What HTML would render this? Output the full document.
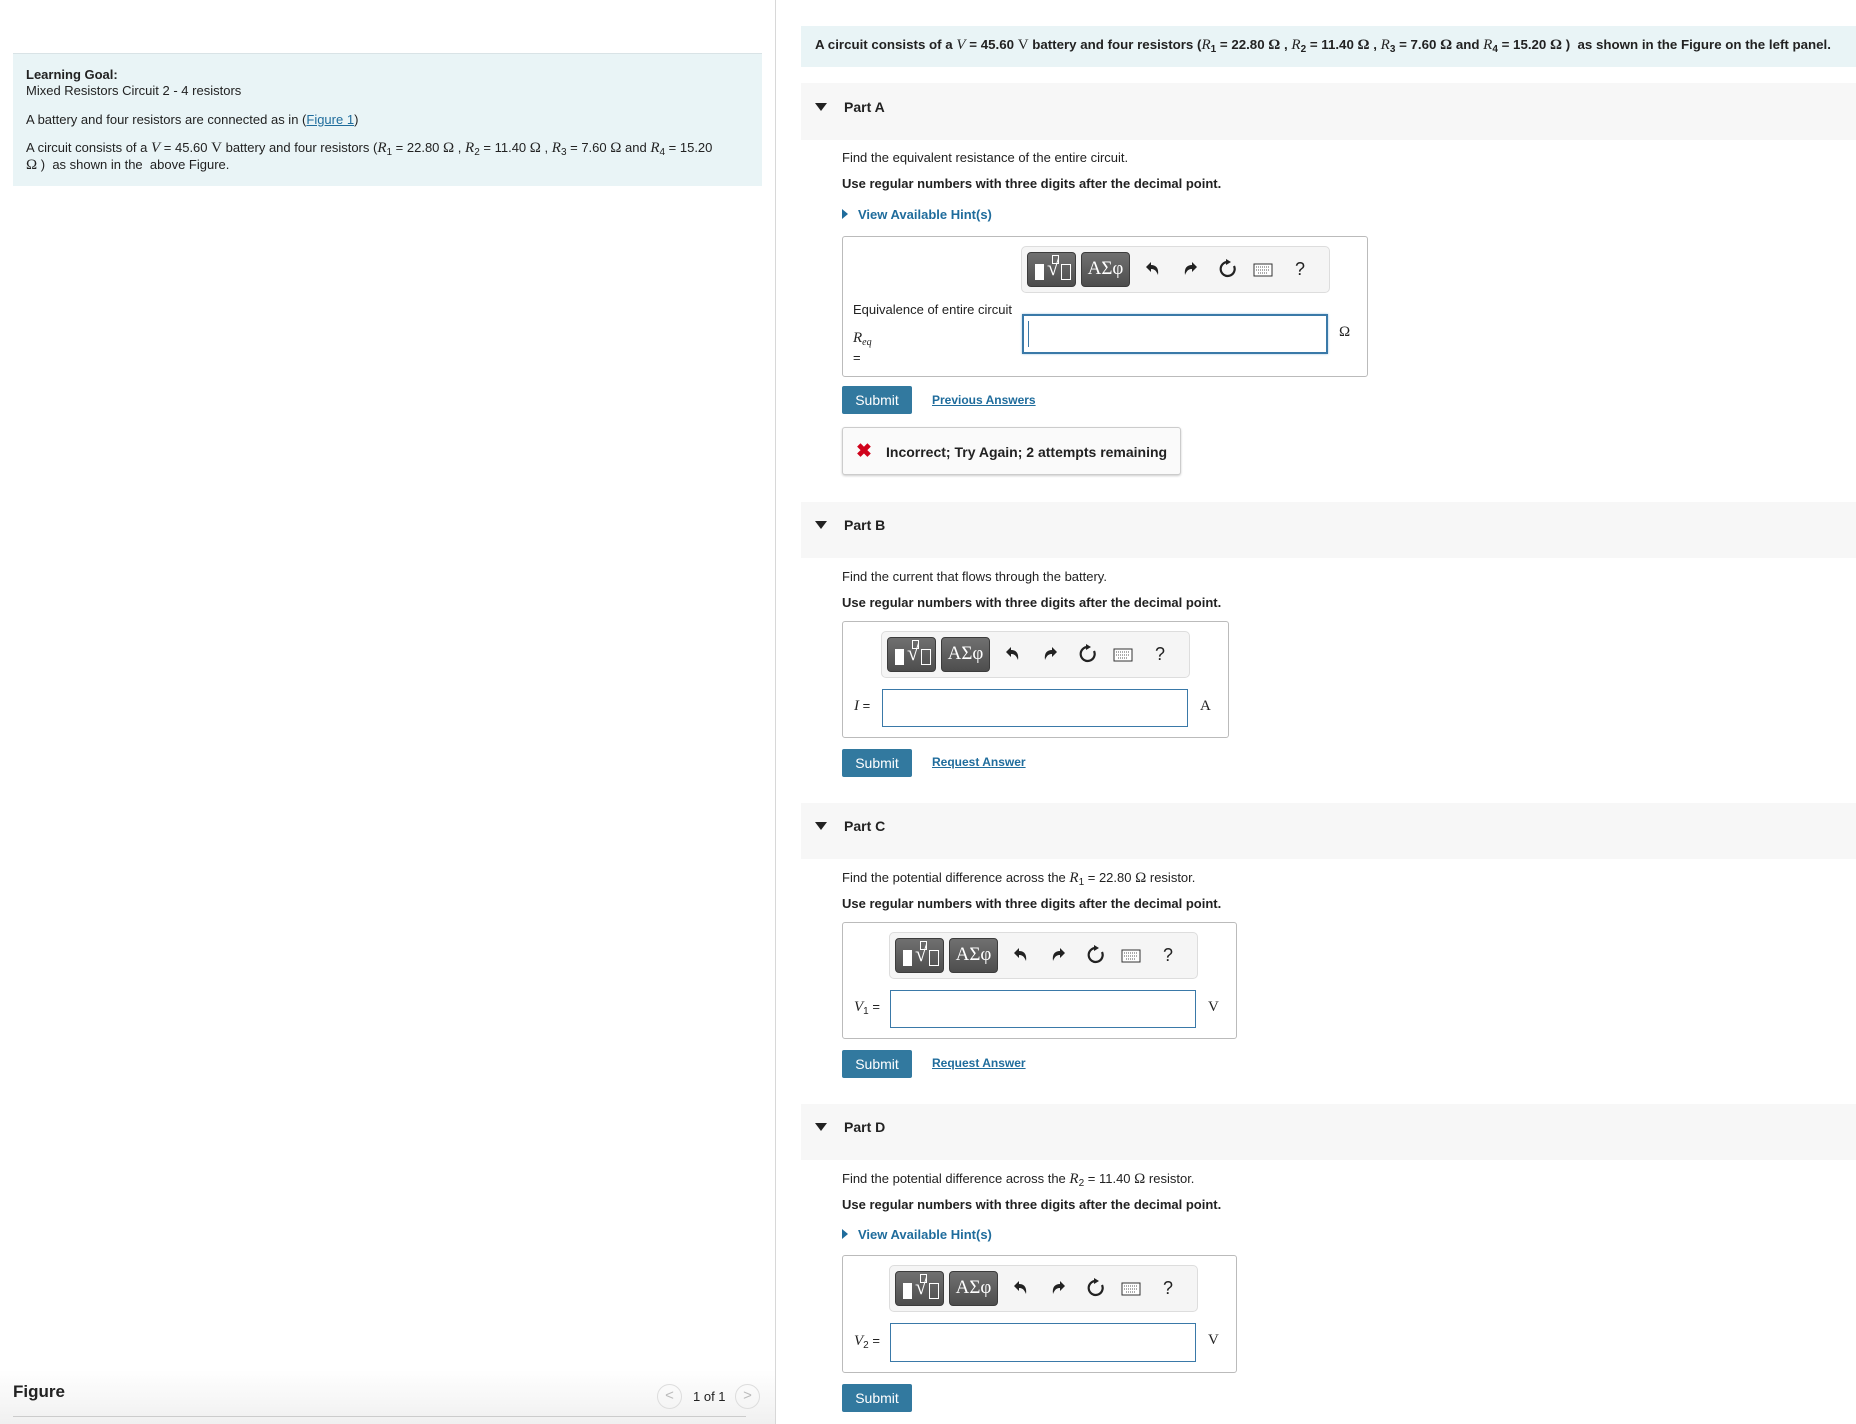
<!DOCTYPE html>
<html><head><meta charset="utf-8"><style>
*{margin:0;padding:0;box-sizing:border-box}
body{width:1856px;height:1424px;position:relative;background:#fff;font-family:"Liberation Sans",Arial,sans-serif;color:#222;font-size:13px;overflow:hidden}
sub{line-height:0;vertical-align:-3px;font-size:10px}
.a{position:absolute;white-space:nowrap}
.m{font-family:"Liberation Serif",serif;font-style:italic;font-size:15px}
.u{font-family:"Liberation Serif",serif;font-size:15px}
.b{font-weight:bold}
.hdr{position:absolute;left:801px;right:0;background:#f7f7f7}
.tri{position:absolute;left:815px;width:0;height:0;border-left:6px solid transparent;border-right:6px solid transparent;border-top:8px solid #222}
.ptitle{position:absolute;left:844px;font-size:14px;font-weight:bold}
.box{position:absolute;border:1px solid #bbb;border-radius:3px;background:#fff}
.tb{position:absolute;width:309px;height:47px;background:#f5f5f5;border:1px solid #ddd;border-radius:5px}
.btn{position:absolute;top:5px;width:49px;height:35px;border-radius:4px;background:linear-gradient(#707070,#4d4d4d);border:1px solid #3c3c3c;color:#fff}
.inp{position:absolute;border:2px solid #3a79a8;background:#fff;box-shadow:0 0 2px #9cc3df}
.sub{position:absolute;left:842px;width:70px;height:28px;background:#32799f;color:#fff;font-size:14px;text-align:center;line-height:28px;border-radius:2px}
.lnk{position:absolute;color:#1f6c9c;font-weight:bold;text-decoration:underline;font-size:12px}
.hint{position:absolute;left:842px;color:#1f6c9c;font-weight:bold;font-size:13px}
.hint:before{content:"";display:inline-block;border-top:5px solid transparent;border-bottom:5px solid transparent;border-left:6px solid #1f6c9c;margin-right:10px}
</style></head><body>

<div class="a" style="left:775px;top:0;width:1px;height:1424px;background:#d8d8d8"></div>
<div class="a" style="left:13px;top:53px;width:749px;height:133px;background:#e9f4f6;border-top:1px solid #d9e3e6"></div>
<div class="a b" style="left:26px;top:67px">Learning Goal:</div>
<div class="a" style="left:26px;top:83px">Mixed Resistors Circuit 2 - 4 resistors</div>
<div class="a" style="left:26px;top:112px">A battery and four resistors are connected as in (<span style="color:#1f6c9c;text-decoration:underline">Figure 1</span>)</div>
<div class="a" style="left:26px;top:140px">A circuit consists of a <span class="m">V</span> = 45.60 <span class="u">V</span> battery and four resistors (<span class="m">R</span><sub>1</sub> = 22.80 <span class="u">Ω</span> , <span class="m">R</span><sub>2</sub> = 11.40 <span class="u">Ω</span> , <span class="m">R</span><sub>3</sub> = 7.60 <span class="u">Ω</span> and <span class="m">R</span><sub>4</sub> = 15.20</div>
<div class="a" style="left:26px;top:157px"><span class="u">Ω</span> )&nbsp; as shown in the&nbsp; above Figure.</div>

<div class="a" style="left:0;top:1370px;width:775px;height:54px;background:linear-gradient(#fff,#f0f0f0)"></div>
<div class="a b" style="left:13px;top:1382px;font-size:17px">Figure</div>
<div class="a" style="left:657px;top:1384px;width:25px;height:25px;border:1px solid #ddd;border-radius:50%;color:#bbb;text-align:center;line-height:22px;font-size:15px">&lt;</div>
<div class="a" style="left:693px;top:1389px;font-size:13px">1 of 1</div>
<div class="a" style="left:735px;top:1384px;width:25px;height:25px;border:1px solid #ddd;border-radius:50%;color:#bbb;text-align:center;line-height:22px;font-size:15px">&gt;</div>
<div class="a" style="left:13px;top:1416px;width:733px;height:1px;background:#ccc"></div>

<div class="a" style="left:801px;top:26px;width:1055px;height:41px;background:#e9f4f6"></div>
<div class="a b" style="left:815px;top:37px;font-size:13.3px">A circuit consists of a <span class="m" style="font-weight:normal">V</span> = 45.60 <span class="u" style="font-weight:normal">V</span> battery and four resistors (<span class="m" style="font-weight:normal">R</span><sub>1</sub> = 22.80 <span class="u">Ω</span> , <span class="m" style="font-weight:normal">R</span><sub>2</sub> = 11.40 <span class="u">Ω</span> , <span class="m" style="font-weight:normal">R</span><sub>3</sub> = 7.60 <span class="u">Ω</span> and <span class="m" style="font-weight:normal">R</span><sub>4</sub> = 15.20 <span class="u">Ω</span> )&nbsp; as shown in the Figure on the left panel.</div>

<div class="hdr" style="top:83px;height:57px"></div>
<div class="tri" style="top:103px"></div>
<div class="ptitle" style="top:99px">Part A</div>
<div class="a" style="left:842px;top:150px">Find the equivalent resistance of the entire circuit.</div>
<div class="a b" style="left:842px;top:176px">Use regular numbers with three digits after the decimal point.</div>
<div class="hint" style="top:207px">View Available Hint(s)</div>
<div class="box" style="left:842px;top:236px;width:526px;height:141px"></div>
<div class="tb" style="left:1021px;top:246px">
<div class="btn" style="left:5px"><span style="position:absolute;left:7px;top:11px;width:9px;height:16px;background:#fff"></span><span style="position:absolute;left:19px;top:2px;font-family:'Liberation Serif',serif;font-size:22px">√</span><span style="position:absolute;left:24px;top:2px;width:7px;height:9px;border:1px solid #fff"></span><span style="position:absolute;left:33px;top:11px;width:10px;height:16px;border:1px solid #fff"></span></div>
<div class="btn" style="left:59px;font-family:'Liberation Serif',serif;font-size:19px;text-align:center;line-height:32px">ΑΣφ</div>
<svg style="position:absolute;left:121px;top:13px" width="18" height="18" viewBox="0 0 18 18"><path d="M3 7 L8 2 L8 5 C13 5 16 8 15 15 C13 10 11 9 8 9 L8 12 Z" fill="#222"/></svg>
<svg style="position:absolute;left:160px;top:13px" width="18" height="18" viewBox="0 0 18 18"><path d="M15 7 L10 2 L10 5 C5 5 2 8 3 15 C5 10 7 9 10 9 L10 12 Z" fill="#222"/></svg>
<svg style="position:absolute;left:196px;top:12px" width="20" height="20" viewBox="0 0 20 20"><path d="M10 3 A7 7 0 1 0 16 7" fill="none" stroke="#222" stroke-width="2.2"/><path d="M8 0 L13 3 L8 6 Z" fill="#222"/></svg>
<svg style="position:absolute;left:231px;top:16px" width="20" height="14" viewBox="0 0 20 14"><rect x="1" y="1" width="18" height="12" fill="#fff" stroke="#333"/><path d="M3 4h14M3 7h14M5 10h10" stroke="#555" stroke-dasharray="1 1"/></svg>
<div class="a" style="left:273px;top:12px;font-size:18px">?</div>
</div>
<div class="a" style="left:853px;top:302px">Equivalence of entire circuit</div>
<div class="a m" style="left:853px;top:330px">R<sub style="font-size:10px">eq</sub></div>
<div class="a" style="left:853px;top:350px">=</div>
<div class="inp" style="left:1022px;top:314px;width:306px;height:40px"><span style="position:absolute;left:4px;top:5px;width:1px;height:26px;background:#3a79a8"></span></div>
<div class="a u" style="left:1339px;top:324px">Ω</div>
<div class="sub" style="top:386px">Submit</div>
<div class="lnk" style="left:932px;top:393px">Previous Answers</div>
<div class="box" style="left:842px;top:427px;width:339px;height:48px;background:#fafafa;border-color:#ccc;box-shadow:0 1px 2px #ccc"></div>
<div class="a b" style="left:856px;top:440px;color:#d0021b;font-size:19px">✖</div>
<div class="a b" style="left:886px;top:444px;font-size:14px">Incorrect; Try Again; 2 attempts remaining</div>

<div class="hdr" style="top:502px;height:56px"></div>
<div class="tri" style="top:521px"></div>
<div class="ptitle" style="top:517px">Part B</div>
<div class="a" style="left:842px;top:569px">Find the current that flows through the battery.</div>
<div class="a b" style="left:842px;top:595px">Use regular numbers with three digits after the decimal point.</div>
<div class="box" style="left:842px;top:621px;width:387px;height:117px"></div>
<div class="tb" style="left:881px;top:631px">
<div class="btn" style="left:5px"><span style="position:absolute;left:7px;top:11px;width:9px;height:16px;background:#fff"></span><span style="position:absolute;left:19px;top:2px;font-family:'Liberation Serif',serif;font-size:22px">√</span><span style="position:absolute;left:24px;top:2px;width:7px;height:9px;border:1px solid #fff"></span><span style="position:absolute;left:33px;top:11px;width:10px;height:16px;border:1px solid #fff"></span></div>
<div class="btn" style="left:59px;font-family:'Liberation Serif',serif;font-size:19px;text-align:center;line-height:32px">ΑΣφ</div>
<svg style="position:absolute;left:121px;top:13px" width="18" height="18" viewBox="0 0 18 18"><path d="M3 7 L8 2 L8 5 C13 5 16 8 15 15 C13 10 11 9 8 9 L8 12 Z" fill="#222"/></svg>
<svg style="position:absolute;left:160px;top:13px" width="18" height="18" viewBox="0 0 18 18"><path d="M15 7 L10 2 L10 5 C5 5 2 8 3 15 C5 10 7 9 10 9 L10 12 Z" fill="#222"/></svg>
<svg style="position:absolute;left:196px;top:12px" width="20" height="20" viewBox="0 0 20 20"><path d="M10 3 A7 7 0 1 0 16 7" fill="none" stroke="#222" stroke-width="2.2"/><path d="M8 0 L13 3 L8 6 Z" fill="#222"/></svg>
<svg style="position:absolute;left:231px;top:16px" width="20" height="14" viewBox="0 0 20 14"><rect x="1" y="1" width="18" height="12" fill="#fff" stroke="#333"/><path d="M3 4h14M3 7h14M5 10h10" stroke="#555" stroke-dasharray="1 1"/></svg>
<div class="a" style="left:273px;top:12px;font-size:18px">?</div>
</div>
<div class="a" style="left:854px;top:698px"><span class="m">I</span> =</div>
<div class="a" style="left:882px;top:689px;width:306px;height:38px;border:1px solid #3a79a8"></div>
<div class="a u" style="left:1200px;top:698px">A</div>
<div class="sub" style="top:749px">Submit</div>
<div class="lnk" style="left:932px;top:755px">Request Answer</div>

<div class="hdr" style="top:803px;height:56px"></div>
<div class="tri" style="top:822px"></div>
<div class="ptitle" style="top:818px">Part C</div>
<div class="a" style="left:842px;top:870px">Find the potential difference across the <span class="m">R</span><sub>1</sub> = 22.80 <span class="u">Ω</span> resistor.</div>
<div class="a b" style="left:842px;top:896px">Use regular numbers with three digits after the decimal point.</div>
<div class="box" style="left:842px;top:922px;width:395px;height:117px"></div>
<div class="tb" style="left:889px;top:932px">
<div class="btn" style="left:5px"><span style="position:absolute;left:7px;top:11px;width:9px;height:16px;background:#fff"></span><span style="position:absolute;left:19px;top:2px;font-family:'Liberation Serif',serif;font-size:22px">√</span><span style="position:absolute;left:24px;top:2px;width:7px;height:9px;border:1px solid #fff"></span><span style="position:absolute;left:33px;top:11px;width:10px;height:16px;border:1px solid #fff"></span></div>
<div class="btn" style="left:59px;font-family:'Liberation Serif',serif;font-size:19px;text-align:center;line-height:32px">ΑΣφ</div>
<svg style="position:absolute;left:121px;top:13px" width="18" height="18" viewBox="0 0 18 18"><path d="M3 7 L8 2 L8 5 C13 5 16 8 15 15 C13 10 11 9 8 9 L8 12 Z" fill="#222"/></svg>
<svg style="position:absolute;left:160px;top:13px" width="18" height="18" viewBox="0 0 18 18"><path d="M15 7 L10 2 L10 5 C5 5 2 8 3 15 C5 10 7 9 10 9 L10 12 Z" fill="#222"/></svg>
<svg style="position:absolute;left:196px;top:12px" width="20" height="20" viewBox="0 0 20 20"><path d="M10 3 A7 7 0 1 0 16 7" fill="none" stroke="#222" stroke-width="2.2"/><path d="M8 0 L13 3 L8 6 Z" fill="#222"/></svg>
<svg style="position:absolute;left:231px;top:16px" width="20" height="14" viewBox="0 0 20 14"><rect x="1" y="1" width="18" height="12" fill="#fff" stroke="#333"/><path d="M3 4h14M3 7h14M5 10h10" stroke="#555" stroke-dasharray="1 1"/></svg>
<div class="a" style="left:273px;top:12px;font-size:18px">?</div>
</div>
<div class="a" style="left:854px;top:999px"><span class="m">V</span><sub>1</sub> =</div>
<div class="a" style="left:890px;top:990px;width:306px;height:38px;border:1px solid #3a79a8"></div>
<div class="a u" style="left:1208px;top:999px">V</div>
<div class="sub" style="top:1050px">Submit</div>
<div class="lnk" style="left:932px;top:1056px">Request Answer</div>

<div class="hdr" style="top:1104px;height:56px"></div>
<div class="tri" style="top:1123px"></div>
<div class="ptitle" style="top:1119px">Part D</div>
<div class="a" style="left:842px;top:1171px">Find the potential difference across the <span class="m">R</span><sub>2</sub> = 11.40 <span class="u">Ω</span> resistor.</div>
<div class="a b" style="left:842px;top:1197px">Use regular numbers with three digits after the decimal point.</div>
<div class="hint" style="top:1227px">View Available Hint(s)</div>
<div class="box" style="left:842px;top:1255px;width:395px;height:118px"></div>
<div class="tb" style="left:889px;top:1265px">
<div class="btn" style="left:5px"><span style="position:absolute;left:7px;top:11px;width:9px;height:16px;background:#fff"></span><span style="position:absolute;left:19px;top:2px;font-family:'Liberation Serif',serif;font-size:22px">√</span><span style="position:absolute;left:24px;top:2px;width:7px;height:9px;border:1px solid #fff"></span><span style="position:absolute;left:33px;top:11px;width:10px;height:16px;border:1px solid #fff"></span></div>
<div class="btn" style="left:59px;font-family:'Liberation Serif',serif;font-size:19px;text-align:center;line-height:32px">ΑΣφ</div>
<svg style="position:absolute;left:121px;top:13px" width="18" height="18" viewBox="0 0 18 18"><path d="M3 7 L8 2 L8 5 C13 5 16 8 15 15 C13 10 11 9 8 9 L8 12 Z" fill="#222"/></svg>
<svg style="position:absolute;left:160px;top:13px" width="18" height="18" viewBox="0 0 18 18"><path d="M15 7 L10 2 L10 5 C5 5 2 8 3 15 C5 10 7 9 10 9 L10 12 Z" fill="#222"/></svg>
<svg style="position:absolute;left:196px;top:12px" width="20" height="20" viewBox="0 0 20 20"><path d="M10 3 A7 7 0 1 0 16 7" fill="none" stroke="#222" stroke-width="2.2"/><path d="M8 0 L13 3 L8 6 Z" fill="#222"/></svg>
<svg style="position:absolute;left:231px;top:16px" width="20" height="14" viewBox="0 0 20 14"><rect x="1" y="1" width="18" height="12" fill="#fff" stroke="#333"/><path d="M3 4h14M3 7h14M5 10h10" stroke="#555" stroke-dasharray="1 1"/></svg>
<div class="a" style="left:273px;top:12px;font-size:18px">?</div>
</div>
<div class="a" style="left:854px;top:1333px"><span class="m">V</span><sub>2</sub> =</div>
<div class="a" style="left:890px;top:1323px;width:306px;height:39px;border:1px solid #3a79a8"></div>
<div class="a u" style="left:1208px;top:1332px">V</div>
<div class="sub" style="top:1384px">Submit</div>
</body></html>
